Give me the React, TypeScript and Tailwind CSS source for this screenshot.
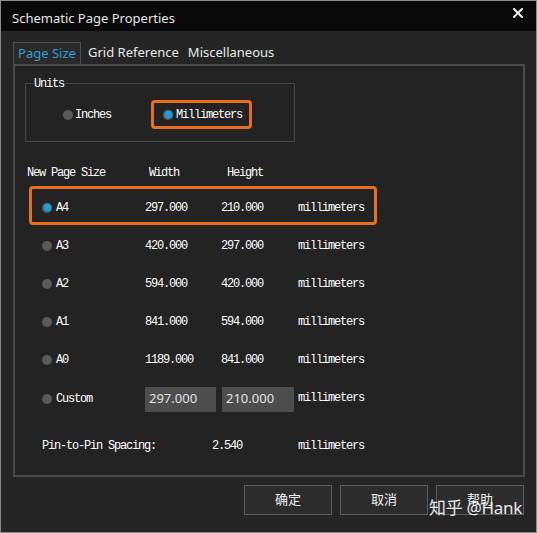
import React from 'react';

const mono = 'font-["Liberation_Mono",monospace] text-[12px] tracking-[-1.2px] text-white leading-none';
const ui = 'font-["Noto_Sans","Noto_Sans_CJK_SC",sans-serif]';

function Radio({ on = false }: { on?: boolean }) {
  return (
    <span className="w-[10px] h-[10px] rounded-full bg-[#5a5a5a] flex items-center justify-center shrink-0">
      {on && <span className="w-[7px] h-[7px] rounded-full bg-[#1e9de0] shadow-[0_0_2px_#2aa8f0]" />}
    </span>
  );
}

type Row = { name: string; w: string; h: string };

const rows: Row[] = [
  { name: 'A3', w: '420.000', h: '297.000' },
  { name: 'A2', w: '594.000', h: '420.000' },
  { name: 'A1', w: '841.000', h: '594.000' },
  { name: 'A0', w: '1189.000', h: '841.000' },
];

function SizeCells({ row, on }: { row: Row; on?: boolean }) {
  return (
    <>
      <Radio on={on} />
      <span className={`${mono} ml-[4px] w-[89px]`}>{row.name}</span>
      <span className={`${mono} w-[76px]`}>{row.w}</span>
      <span className={`${mono} w-[77px]`}>{row.h}</span>
      <span className={mono}>millimeters</span>
    </>
  );
}

export default function App() {
  return (
    <div className="relative w-[537px] h-[533px] border border-[#8c8c8c] bg-[#252525] flex flex-col overflow-hidden">
      {/* title bar */}
      <div className="h-[30px] bg-[#090909] flex items-center justify-between pl-[11px] pr-[13px] shrink-0">
        <span className={`${ui} text-[13px] text-[#e6e6e6] pt-[5px]`}>Schematic Page Properties</span>
        <svg width="10" height="10" viewBox="0 0 10 10" className="mb-[6px]">
          <path d="M1 1 L9 9 M9 1 L1 9" stroke="#f4f4f4" strokeWidth="2" strokeLinecap="square" />
        </svg>
      </div>

      <div className="flex flex-col pl-[12px] pr-[11px] pt-[11px]">
        {/* tabs */}
        <div className={`${ui} flex items-end h-[22px] text-[13px]`}>
          <div className="h-[22px] w-[68px] border border-b-0 border-[#505050] bg-[#2a2a2a] flex items-center justify-center text-[#2f9fd8]">
            Page Size
          </div>
          <span className="ml-[7px] h-[22px] flex items-center text-[#e8e8e8]">Grid Reference</span>
          <span className="ml-[9px] h-[22px] flex items-center text-[#e8e8e8]">Miscellaneous</span>
        </div>

        {/* panel */}
        <div className="h-[413px] border-2 border-[#4a4a4a] bg-[#232323] flex flex-col">
          {/* units group */}
          <div className="relative ml-[10px] mt-[17px] w-[270px] h-[59px] border border-[#474747] flex items-center pl-[37px] pt-[4px]">
            <span className={`${mono} absolute left-[7px] -top-[6px] bg-[#232323] px-[1px]`}>Units</span>
            <Radio />
            <span className={`${mono} ml-[2px]`}>Inches</span>
            <div className="ml-[40px] h-[29px] border-[3px] border-[#e8701c] rounded-[4px] flex items-center pl-[9px] pr-[7px]">
              <Radio on />
              <span className={`${mono} ml-[3px]`}>Millimeters</span>
            </div>
          </div>

          {/* header */}
          <div className="flex items-center h-[16px] mt-[23px] pl-[12px]">
            <span className={`${mono} w-[122px]`}>New Page Size</span>
            <span className={`${mono} w-[78px]`}>Width</span>
            <span className={mono}>Height</span>
          </div>

          {/* A4 selected */}
          <div className="ml-[14px] mt-[5px] w-[348px] h-[39px] border-[3px] border-[#e8701c] rounded-[4px] flex items-center pl-[10px] pt-[4px]">
            <SizeCells row={{ name: 'A4', w: '297.000', h: '210.000' }} on />
          </div>

          {rows.map((r) => (
            <div key={r.name} className="h-[38px] flex items-center pl-[27px] pt-[3px]">
              <SizeCells row={r} />
            </div>
          ))}

          {/* custom */}
          <div className="h-[40px] flex items-center pl-[27px] pt-[4px]">
            <Radio />
            <span className={`${mono} ml-[4px] w-[89px]`}>Custom</span>
            <div className={`${ui} w-[71px] h-[25px] bg-[#4d4d4d] text-[13px] text-[#e4e4e4] flex items-center pl-[4px]`}>297.000</div>
            <div className={`${ui} ml-[6px] w-[72px] h-[25px] bg-[#4d4d4d] text-[13px] text-[#e4e4e4] flex items-center pl-[4px]`}>210.000</div>
            <span className={`${mono} ml-[4px] -mt-[3px]`}>millimeters</span>
          </div>

          {/* pin spacing */}
          <div className="flex items-center h-[16px] mt-[21px] pl-[27px]">
            <span className={`${mono} w-[170px]`}>Pin-to-Pin Spacing:</span>
            <span className={`${mono} w-[86px]`}>2.540</span>
            <span className={mono}>millimeters</span>
          </div>
        </div>

        {/* buttons */}
        <div className={`${ui} flex justify-end gap-[8px] mt-[8px] pr-[1px] text-[13px] text-[#f0f0f0]`}>
          {['确定', '取消', '帮助'].map((t) => (
            <button key={t} className="w-[88px] h-[30px] border border-[#5e5e5e] bg-[#2c2c2c] flex items-center justify-center">
              {t}
            </button>
          ))}
        </div>
      </div>

      {/* watermark */}
      <span className={`${ui} absolute left-[428px] top-[498px] text-[17px] leading-none text-white/90 tracking-[-0.3px]`}>知乎 @Hank</span>
    </div>
  );
}
